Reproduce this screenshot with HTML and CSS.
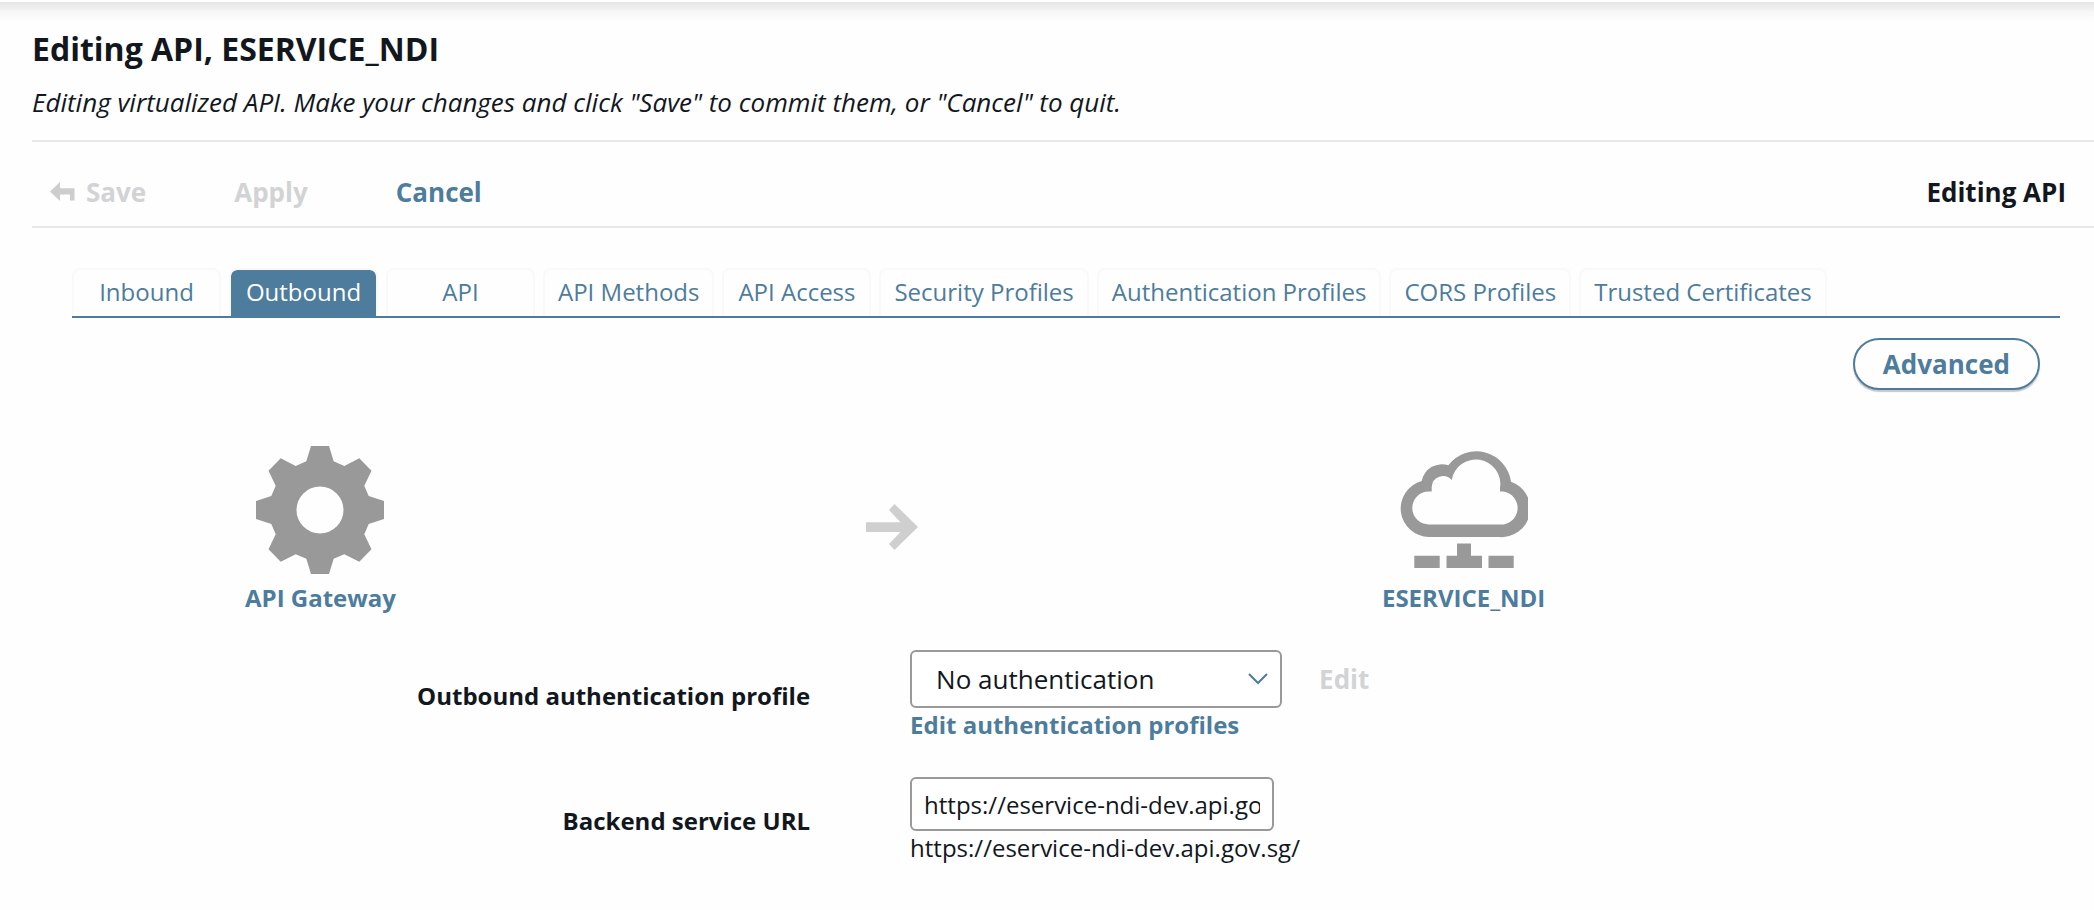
FILE: index.html
```html
<!DOCTYPE html>
<html lang="en">
<head>
<meta charset="utf-8">
<meta name="viewport" content="width=device-width, initial-scale=1">
<title>Editing API, ESERVICE_NDI</title>
<link rel="stylesheet" href="styles.css">
</head>
<body>
<div class="top-shadow"></div>
<main class="page">
  <header class="page-header">
    <h1 class="title">Editing API, ESERVICE_NDI</h1>
    <p class="subtitle">Editing virtualized API. Make your changes and click "Save" to commit them, or "Cancel" to quit.</p>
  </header>

  <div class="toolbar">
    <div class="actions">
      <button class="action" type="button" disabled>
        <svg class="save-icon" viewBox="0 0 25 20" aria-hidden="true"><path d="M0 9.500 10 0v6.300h14.500V18.500H20V12.500H10V19z"/></svg>
        Save
      </button>
      <button class="action" type="button" disabled>Apply</button>
      <button class="action" type="button">Cancel</button>
    </div>
    <strong class="status">Editing API</strong>
  </div>

  <section class="content">
    <nav class="tabs">
      <a class="tab" href="#inbound">Inbound</a>
      <a class="tab tab-active" href="#outbound" aria-current="page">Outbound</a>
      <a class="tab" href="#api">API</a>
      <a class="tab" href="#methods">API Methods</a>
      <a class="tab" href="#access">API Access</a>
      <a class="tab" href="#security">Security Profiles</a>
      <a class="tab" href="#authentication">Authentication Profiles</a>
      <a class="tab" href="#cors">CORS Profiles</a>
      <a class="tab" href="#certificates">Trusted Certificates</a>
    </nav>

    <div class="advanced-row">
      <button class="advanced" type="button">Advanced</button>
    </div>

    <div class="route">
      <a class="endpoint" href="#gateway">
        <svg class="endpoint-icon" viewBox="0 0 128 128" aria-hidden="true">
          <path fill-rule="evenodd" d="M55 0H73L77.700 15.300 88.300 20 103.300 12.300 115.500 24.700 108.300 39.700 112.700 50 128 55V73L112.700 78 108.300 88.300 115.500 103.300 103.300 115.700 88.300 108.300 77.700 112.700 73 128H55L50.300 112.700 39.700 108.300 24.700 115.700 12.500 103.300 19.700 88.300 15.300 78 0 73V55L15.300 50 19.700 39.700 12.500 24.700 24.700 12.300 39.700 20 50.300 15.300zM64 40.500a23.500 23.500 0 1 0 0 47 23.500 23.500 0 1 0 0-47z"/>
        </svg>
        <span>API Gateway</span>
      </a>
      <svg class="route-arrow" viewBox="0 0 52 46" aria-hidden="true"><path d="M0 18.300H34.500L23 6 28.500 0 52 23 28.500 46 23 40 34.500 28H0z"/></svg>
      <a class="endpoint" href="#service">
        <svg class="endpoint-icon" viewBox="0 -6 128 128" aria-hidden="true">
          <path fill-rule="evenodd" d="M29 85A28.500 28.500 0 0 1 21.700 29 20.500 20.500 0 0 1 48.300 13.300 35 35 0 0 1 111 29.700 28.500 28.500 0 0 1 99 85zM29 72.500H99A16.500 16.500 0 0 0 103 39.500H100V36A24 24 0 0 0 51.700 28 11.500 11.500 0 0 0 31.700 35V39.500H28.500A16.500 16.500 0 0 0 29 72.500z"/>
          <path d="M57 91.500H71V103.700H82V116H46.500V103.700H57zM14.300 103.700H39.700V116H14.300zM88.500 103.700H113.700V116H88.500z"/>
        </svg>
        <span>ESERVICE_NDI</span>
      </a>
    </div>

    <form class="settings">
      <label class="setting-label" for="auth-profile">Outbound authentication profile</label>
      <div class="setting-value">
        <div class="select-row">
          <div class="select-box">
            <select class="select" id="auth-profile">
              <option>No authentication</option>
            </select>
            <svg class="chevron" viewBox="0 0 20 12" aria-hidden="true"><path d="M1 1 10 10 19 1"/></svg>
          </div>
          <button class="edit" type="button" disabled>Edit</button>
        </div>
        <a class="profiles-link" href="#authentication">Edit authentication profiles</a>
      </div>

      <label class="setting-label" for="backend-url">Backend service URL</label>
      <div class="setting-value">
        <input class="url-input" id="backend-url" type="text" value="https://eservice-ndi-dev.api.gov.sg">
        <span class="url-full">https://eservice-ndi-dev.api.gov.sg/</span>
      </div>
    </form>
  </section>
</main>
</body>
</html>
```

FILE: styles.css
```css
* {
  box-sizing: border-box;
}

body {
  margin: 0;
  background: #fefefe;
  color: #12171e;
  font-family: "Open Sans", "Noto Sans", sans-serif;
  font-size: 24px;
  line-height: 32px;
}

button,
input,
select {
  margin: 0;
  font: inherit;
  color: inherit;
}

button {
  padding: 0;
  border: 0;
  background: none;
}

a {
  color: #4d7c9d;
  text-decoration: none;
}

.top-shadow {
  height: 22px;
  border-top: 2px solid #fff;
  background: linear-gradient(#e5e5e5, #ebebeb 20%, #f7f7f7 50%, #fefefe);
}

.page {
  padding-left: 32px;
}

.page-header {
  padding: 3px 0 21px;
  border-bottom: 2px solid #e8e8e8;
}

.title {
  margin: 0;
  font-size: 32px;
  line-height: 48px;
}

.subtitle {
  margin: 12px 0 0;
  font-size: 26px;
  line-height: 34px;
  font-style: italic;
}

.toolbar {
  display: flex;
  justify-content: space-between;
  align-items: center;
  padding: 32px 28px 16px 18px;
  border-bottom: 2px solid #e8e8e8;
  font-size: 26px;
  line-height: 36px;
}

.actions {
  display: flex;
  gap: 88px;
}

.action {
  display: flex;
  align-items: center;
  gap: 11px;
  color: #4d7c9d;
  font-weight: 700;
}

.action:disabled,
.edit:disabled {
  color: #d2d3d4;
}

.save-icon {
  width: 25px;
  height: 20px;
  fill: #cccdce;
}

.content {
  padding: 40px 34px 0 40px;
}

.tabs {
  display: flex;
  gap: 8px;
  border-bottom: 2px solid #4d7c9d;
}

.tab {
  min-width: 149px;
  height: 48px;
  padding: 6px 13px;
  border: 2px solid #f9f9f9;
  border-bottom: 0;
  border-radius: 8px 8px 0 0;
  text-align: center;
  white-space: nowrap;
}

.tab-active {
  background: #4d7c9d;
  background-clip: padding-box;
  color: #fff;
}

.advanced-row {
  display: flex;
  justify-content: flex-end;
  padding: 20px 20px 0;
}

.advanced {
  padding: 6px 28px;
  border: 2px solid #4d7c9d;
  border-radius: 26px;
  box-shadow: 0 2px 1px #c8c8c8;
  color: #4d7c9d;
  font-size: 26px;
  line-height: 36px;
  font-weight: 700;
}

.route {
  display: grid;
  grid-template-columns: 25% 32.5% 25%;
  align-items: center;
  justify-items: center;
  padding-top: 56px;
}

.endpoint {
  display: flex;
  flex-direction: column;
  align-items: center;
  gap: 8px;
  font-weight: 700;
}

.endpoint-icon {
  width: 128px;
  height: 128px;
  fill: #999;
}

.route-arrow {
  width: 52px;
  height: 46px;
  margin-bottom: 6px;
  fill: #cfcfcf;
}

.settings {
  display: grid;
  grid-template-columns: 37% 1fr;
  gap: 36px 100px;
  align-items: center;
  padding: 36px 0 0 4px;
}

.setting-label {
  font-weight: 700;
  text-align: right;
}

.setting-value {
  display: flex;
  flex-direction: column;
  align-items: flex-start;
  gap: 1px;
}

.select-row {
  display: flex;
  align-items: center;
  gap: 37px;
  font-size: 26px;
}

.select-box {
  position: relative;
  width: 372px;
}

.select {
  display: block;
  width: 100%;
  height: 58px;
  padding: 0 60px 0 24px;
  appearance: none;
  border: 2px solid #999;
  border-radius: 6px;
  background: #fff;
}

.chevron {
  position: absolute;
  top: 23px;
  right: 14px;
  width: 20px;
  height: 12px;
  fill: none;
  stroke: #4d7c9d;
  stroke-width: 2;
  pointer-events: none;
}

.edit {
  font-weight: 700;
}

.profiles-link {
  font-weight: 700;
}

.url-input {
  width: 364px;
  height: 54px;
  padding: 0 12px;
  border: 2px solid #999;
  border-radius: 6px;
  background: #fff;
}
```
